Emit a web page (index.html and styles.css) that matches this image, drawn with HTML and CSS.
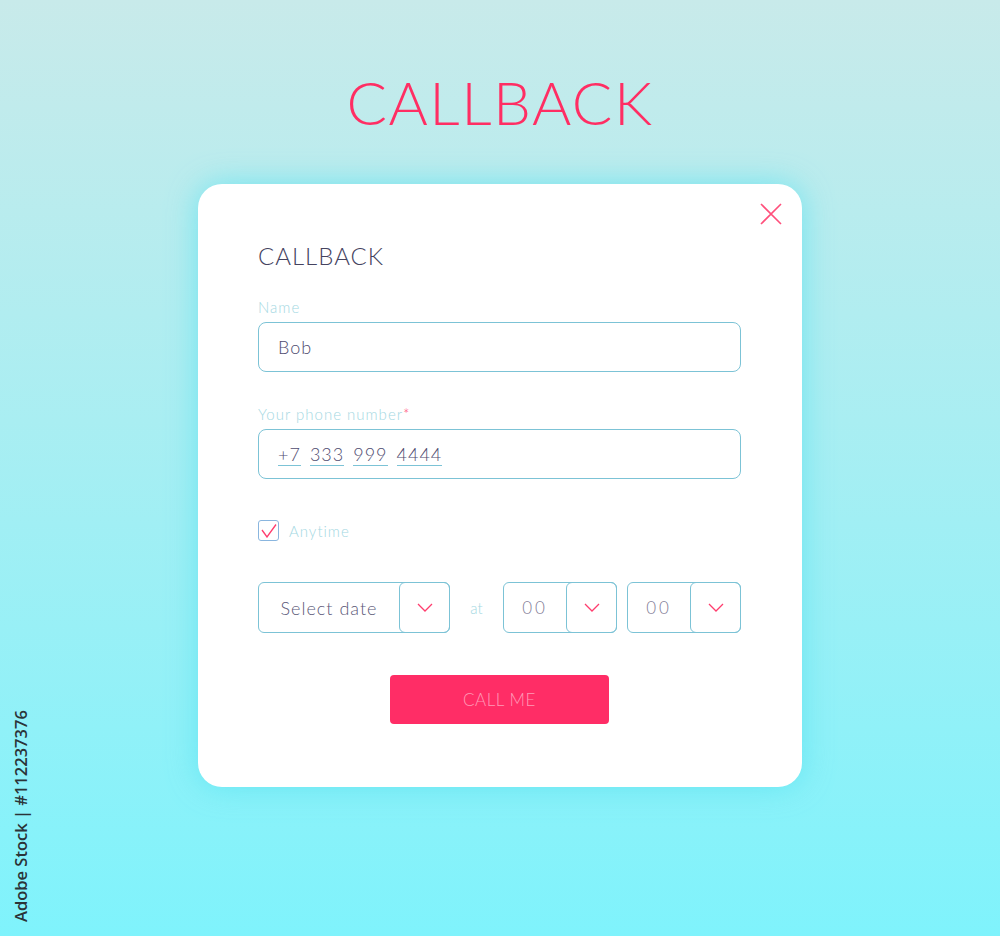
FILE: index.html
```html
<!DOCTYPE html>
<html lang="en">
<head>
    <meta charset="UTF-8">
    <meta name="viewport" content="width=device-width, initial-scale=1.0">
    <title>Callback</title>
    <link rel="stylesheet" href="styles.css">
</head>
<body>
    <div class="stock-id">Adobe Stock | #112237376</div>

    <h1 class="page-title">CALLBACK</h1>

    <div class="modal">
        <button class="close-button" aria-label="Close">
            <svg width="22" height="22" viewBox="0 0 22 22">
                <path d="M1 1 L21 21 M21 1 L1 21" stroke="#ff4f7b" stroke-width="1.6" fill="none"/>
            </svg>
        </button>

        <h2 class="modal-title">CALLBACK</h2>

        <form class="callback-form">
            <div class="field">
                <label class="field-label" for="name">Name</label>
                <div class="text-input" id="name">Bob</div>
            </div>

            <div class="field">
                <label class="field-label" for="phone">Your phone number<span class="required">*</span></label>
                <div class="text-input phone" id="phone">
                    <span class="digits">+7</span>
                    <span class="digits">333</span>
                    <span class="digits">999</span>
                    <span class="digits">4444</span>
                </div>
            </div>

            <div class="check-row">
                <span class="checkbox">
                    <svg width="16" height="14" viewBox="0 0 16 14">
                        <path d="M1 6 L6 13 L15 0.5" stroke="#ff3d6e" stroke-width="1.3" fill="none"/>
                    </svg>
                </span>
                <span class="check-label">Anytime</span>
            </div>

            <div class="time-row">
                <div class="select date-select">
                    <span class="select-value">Select date</span>
                    <span class="select-arrow">
                        <svg width="16" height="9" viewBox="0 0 16 9"><path d="M1 1 L8 8 L15 1" stroke="#ff3d6e" stroke-width="1.3" fill="none"/></svg>
                    </span>
                </div>
                <span class="at">at</span>
                <div class="select time-select">
                    <span class="select-value">00</span>
                    <span class="select-arrow">
                        <svg width="16" height="9" viewBox="0 0 16 9"><path d="M1 1 L8 8 L15 1" stroke="#ff3d6e" stroke-width="1.3" fill="none"/></svg>
                    </span>
                </div>
                <div class="select time-select">
                    <span class="select-value">00</span>
                    <span class="select-arrow">
                        <svg width="16" height="9" viewBox="0 0 16 9"><path d="M1 1 L8 8 L15 1" stroke="#ff3d6e" stroke-width="1.3" fill="none"/></svg>
                    </span>
                </div>
            </div>

            <div class="submit-row">
                <button type="submit" class="call-button">CALL ME</button>
            </div>
        </form>
    </div>
</body>
</html>
```

FILE: styles.css
```css
body {
    font-family: Lato, "Open Sans", sans-serif;
    font-weight: 300;
    margin: 0;
    height: 936px;
    background: linear-gradient(180deg, #c8eaea 0%, #a9eef2 45%, #7ff3fc 100%);
    display: flex;
    flex-direction: column;
    align-items: center;
    overflow: hidden;
}

.stock-id {
    position: absolute;
    left: 8px;
    top: 922px;
    transform: rotate(-90deg);
    transform-origin: left top;
    font-family: "Open Sans", sans-serif;
    font-weight: 600;
    font-size: 16.5px;
    color: #2b3438;
    white-space: nowrap;
    line-height: 26px;
}

.page-title {
    margin: 70px 0 0;
    font-size: 60px;
    font-weight: 300;
    letter-spacing: 1.5px;
    color: #ff2e63;
    line-height: 64px;
}

.modal {
    position: relative;
    margin-top: 50px;
    width: 604px;
    height: 603px;
    box-sizing: border-box;
    padding: 58px 61px 0 60px;
    background: #fff;
    border-radius: 24px;
    box-shadow: 0 0 30px rgba(90, 225, 240, 0.75);
}

.close-button {
    position: absolute;
    top: 19px;
    right: 20px;
    background: none;
    border: none;
    padding: 0;
    cursor: pointer;
}

.modal-title {
    margin: 0 0 29px;
    font-size: 24px;
    font-weight: 300;
    letter-spacing: 1px;
    color: #45435f;
    line-height: 28px;
}

.callback-form {
    display: flex;
    flex-direction: column;
}

.field {
    display: flex;
    flex-direction: column;
    gap: 7px;
    margin-bottom: 34px;
}

.field-label {
    font-size: 15px;
    color: #a4d8e2;
    line-height: 16px;
    letter-spacing: 1px;
}

.required {
    color: #ff3d6e;
}

.text-input {
    height: 50px;
    box-sizing: border-box;
    border: 1px solid #7cc3d6;
    border-radius: 8px;
    padding: 0 19px;
    display: flex;
    align-items: center;
    font-size: 18px;
    font-weight: 300;
    color: #4f4c70;
    letter-spacing: 1px;
}

.phone {
    gap: 9px;
}

.digits {
    border-bottom: 1px solid #7cc3d6;
    line-height: 20px;
    padding-bottom: 1px;
    margin-top: 2px;
}

.check-row {
    display: flex;
    align-items: center;
    gap: 10px;
    margin-top: 7px;
}

.checkbox {
    width: 21px;
    height: 21px;
    box-sizing: border-box;
    border: 1px solid #8ab6df;
    border-radius: 3px;
    display: flex;
    align-items: center;
    justify-content: center;
}

.check-label {
    font-size: 15px;
    color: #a4d8e2;
    letter-spacing: 1px;
}

.time-row {
    display: flex;
    align-items: center;
    margin-top: 41px;
}

.select {
    height: 51px;
    box-sizing: border-box;
    border: 1px solid #7cc3d6;
    border-radius: 6px;
    display: flex;
    align-items: center;
}

.select-value {
    flex: 1;
    text-align: center;
    font-size: 18px;
    font-weight: 300;
    color: #5b5878;
    letter-spacing: 1px;
}

.select-arrow {
    width: 51px;
    height: 51px;
    margin: -1px -1px -1px 0;
    box-sizing: border-box;
    border: 1px solid #7cc3d6;
    border-radius: 6px;
    display: flex;
    align-items: center;
    justify-content: center;
}

.date-select {
    width: 192px;
}

.at {
    width: 53px;
    text-align: center;
    font-size: 15px;
    color: #a4d8e2;
}

.time-select {
    width: 114px;
}

.time-select + .time-select {
    margin-left: 10px;
}

.time-select .select-value {
    font-size: 17px;
    letter-spacing: 3px;
    color: #7f7c96;
}

.submit-row {
    display: flex;
    justify-content: center;
    margin-top: 42px;
}

.call-button {
    width: 219px;
    height: 49px;
    border: none;
    border-radius: 4px;
    background: #ff2d66;
    color: #ff9ab6;
    font-family: Lato, "Open Sans", sans-serif;
    font-weight: 300;
    font-size: 17px;
    letter-spacing: 0.5px;
    cursor: pointer;
}
```
